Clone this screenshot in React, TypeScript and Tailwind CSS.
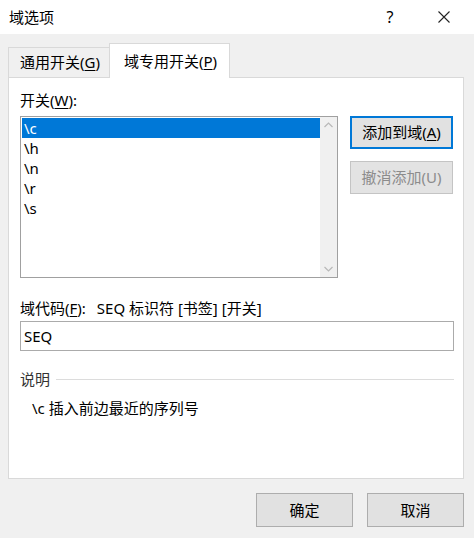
import React from "react";

const font = "font-['Noto_Sans','Noto_Sans_CJK_SC',sans-serif]";

const Key = ({ k }: { k: string }) => <span className="underline underline-offset-2">{k}</span>;

const items = ["\\c", "\\h", "\\n", "\\r", "\\s"];

export default function App() {
  return (
    <div className={`w-[474px] h-[538px] bg-[#f0f0f0] text-[15px] text-black flex flex-col ${font}`}>
      {/* title bar */}
      <div className="h-[34px] bg-white flex items-center pl-[9px] shrink-0">
        <span className="flex-1">域选项</span>
        <span className="w-[20px] text-center text-[16px] mr-[38px]">?</span>
        <svg width="12" height="12" viewBox="0 0 12 12" className="mr-[24px]">
          <path d="M0.5 0.5 L11.5 11.5 M11.5 0.5 L0.5 11.5" stroke="#222" strokeWidth="1.1" fill="none" />
        </svg>
      </div>

      <div className="pt-[9px] px-[8px] flex flex-col">
        {/* tabs */}
        <div className="flex items-end h-[34px] relative z-10">
          <div className="h-[30px] w-[102px] border border-b-0 border-[#d9d9d9] bg-[#f0f0f0] flex items-center pl-[11px]">
            通用开关(<Key k="G" />)
          </div>
          <div className="h-[35px] w-[121px] border border-b-0 border-[#d9d9d9] bg-white flex items-center pl-[14px] -ml-px mb-[-1px]">
            域专用开关(<Key k="P" />)
          </div>
        </div>

        {/* panel */}
        <div className="w-[456px] h-[402px] bg-white border border-[#d9d9d9] pl-[11px] flex flex-col">
          <div className="h-[20px] leading-[20px] mt-[12px]">
            开关(<Key k="W" />):
          </div>
          <div className="flex gap-[12px] mt-[6px]">
            <div className="w-[318px] h-[162px] border border-[#a0a0a0] p-px flex">
              <div className="flex-1 flex flex-col">
                {items.map((it, i) => (
                  <div
                    key={it}
                    className={`h-[20px] leading-[20px] pl-[2px] ${i === 0 ? "bg-[#0078d7] text-white" : ""}`}
                  >
                    {it}
                  </div>
                ))}
              </div>
              <div className="w-[17px] bg-[#f0f0f0] flex flex-col items-center justify-between py-[5px] -my-px -mr-px">
                <svg width="9" height="6" viewBox="0 0 9 6">
                  <path d="M0.5 5 L4.5 1 L8.5 5" stroke="#b8b8b8" strokeWidth="1.2" fill="none" />
                </svg>
                <svg width="9" height="6" viewBox="0 0 9 6">
                  <path d="M0.5 1 L4.5 5 L8.5 1" stroke="#b8b8b8" strokeWidth="1.2" fill="none" />
                </svg>
              </div>
            </div>
            <div className="flex flex-col gap-[12px]">
              <button className="w-[103px] h-[33px] bg-[#e1e1e1] border-2 border-[#0078d7] flex items-center justify-center">
                添加到域(<Key k="A" />)
              </button>
              <button className="w-[103px] h-[33px] bg-[#e3e3e3] border border-[#c4c4c4] text-[#8c8c8c] flex items-center justify-center">
                撤消添加(U)
              </button>
            </div>
          </div>

          <div className="h-[20px] leading-[20px] mt-[20px] flex">
            <span>
              域代码(<Key k="F" />):
            </span>
            <span className="ml-[11px]">SEQ 标识符 [书签] [开关]</span>
          </div>
          <div className="w-[434px] h-[30px] border border-[#ababab] mt-[3px] flex items-center pl-[3px]">
            SEQ
          </div>

          <div className="h-[20px] mt-[18px] flex items-center w-[434px]">
            <span className="leading-[20px] text-[#333]">说明</span>
            <div className="flex-1 h-px bg-[#dcdcdc] ml-[6px]" />
          </div>
          <div className="h-[20px] leading-[20px] mt-[9px] pl-[12px]">\c 插入前边最近的序列号</div>
        </div>

        {/* bottom buttons */}
        <div className="flex justify-end gap-[14px] mt-[14px] pr-[1px] w-[457px]">
          <button className="w-[97px] h-[34px] bg-[#e1e1e1] border border-[#adadad]">确定</button>
          <button className="w-[97px] h-[34px] bg-[#e1e1e1] border border-[#adadad]">取消</button>
        </div>
      </div>
    </div>
  );
}
